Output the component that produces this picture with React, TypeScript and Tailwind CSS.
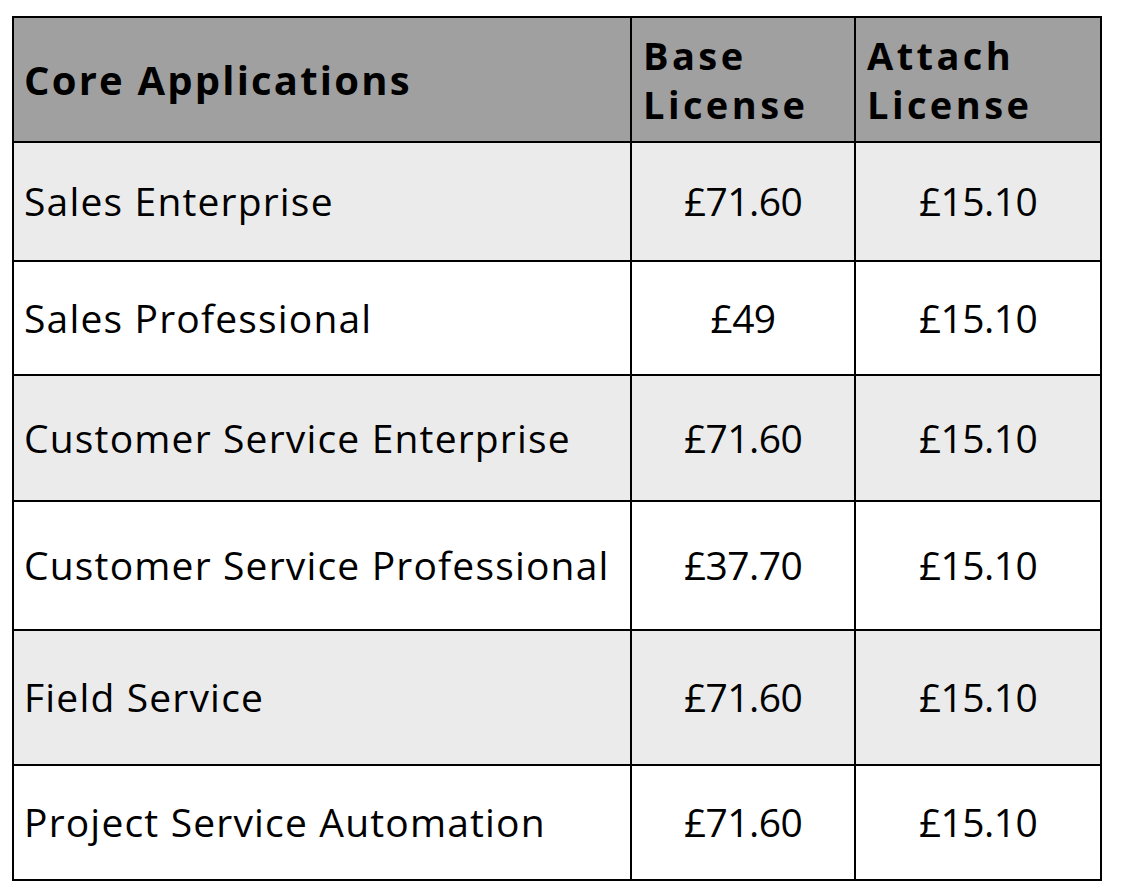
const rows = [
  { name: 'Sales Enterprise', base: '£71.60', attach: '£15.10', h: 'h-[117px]', bg: 'bg-[#ebebeb]' },
  { name: 'Sales Professional', base: '£49', attach: '£15.10', h: 'h-[112px]', bg: 'bg-white' },
  { name: 'Customer Service Enterprise', base: '£71.60', attach: '£15.10', h: 'h-[124px]', bg: 'bg-[#ebebeb]' },
  { name: 'Customer Service Professional', base: '£37.70', attach: '£15.10', h: 'h-[127px]', bg: 'bg-white' },
  { name: 'Field Service', base: '£71.60', attach: '£15.10', h: 'h-[133px]', bg: 'bg-[#ebebeb]' },
  { name: 'Project Service Automation', base: '£71.60', attach: '£15.10', h: 'h-[113px]', bg: 'bg-white' },
];

export default function App() {
  return (
    <div className="min-h-[896px] bg-white pt-[16px] pl-[12px] font-['Open_Sans','Liberation_Sans',sans-serif] text-black">
      <div className="grid w-[1090px] grid-cols-[616px_222px_244px] gap-[2px] border-2 border-black bg-black">
        <div className="flex h-[123px] items-center bg-[#a0a0a0] px-[10px] text-[40px] font-bold tracking-[0.055em]">
          Core Applications
        </div>
        <div className="flex h-[123px] items-center bg-[#a0a0a0] px-[11px] text-[38px] font-bold leading-[49px] tracking-[0.09em]">
          <span>
            Base
            <br />
            License
          </span>
        </div>
        <div className="flex h-[123px] items-center bg-[#a0a0a0] px-[11px] text-[38px] font-bold leading-[49px] tracking-[0.09em]">
          <span>
            Attach
            <br />
            License
          </span>
        </div>
        {rows.map((r) => (
          <div key={r.name} className="contents">
            <div className={`flex items-center px-[10px] text-[39px] tracking-[0.03em] ${r.h} ${r.bg}`}>{r.name}</div>
            <div className={`flex items-center justify-center text-[39px] tracking-[-0.015em] ${r.h} ${r.bg}`}>{r.base}</div>
            <div className={`flex items-center justify-center text-[39px] tracking-[-0.015em] ${r.h} ${r.bg}`}>{r.attach}</div>
          </div>
        ))}
      </div>
    </div>
  );
}
